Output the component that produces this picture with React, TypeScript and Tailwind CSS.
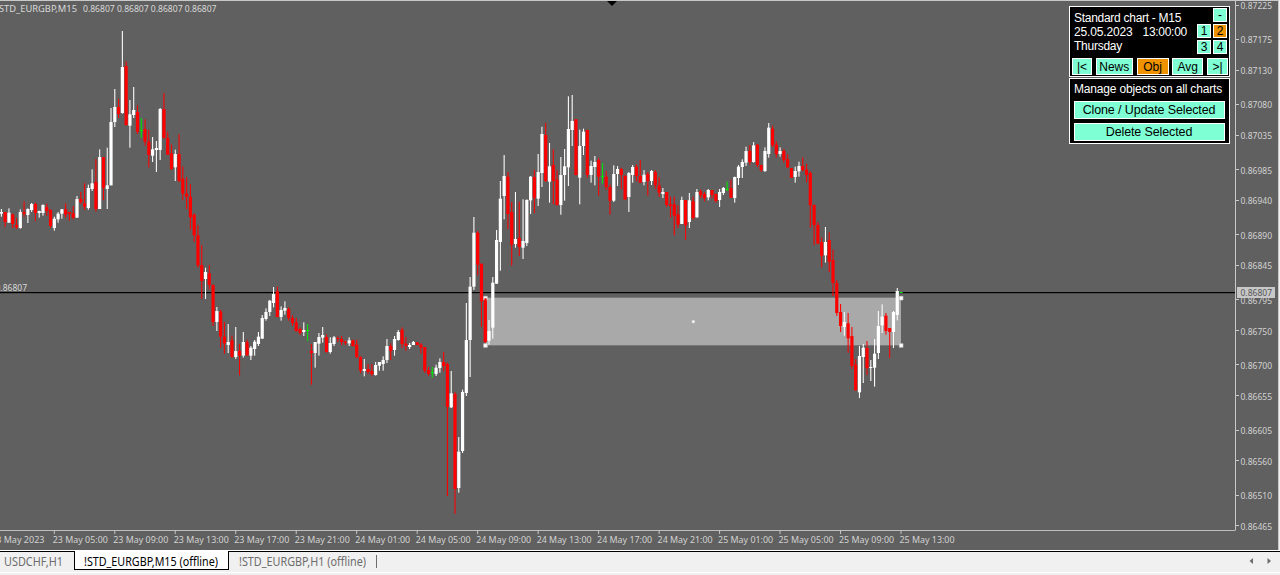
type CandleKind = "up" | "down" | "flat";

interface Candle {
  kind: CandleKind;
  high: number;
  top: number;
  bottom: number;
  low: number;
}

// Chart units are thirds of a pixel
const STEP = 11.34;
const FIRST_X = 4.2;

// Each session: vertical base, then "kind high top bottom low" per M15 bar
const sessions: { base: number; bars: string }[] = [
  {
    base: 0,
    bars: `W 627 636 641 650,R 636 636 666 681,W 625 638 668 668,R 641 643 672 684,R 655 675 682 687,W 628 636 684 686,
R 604 636 641 650,W 625 627 645 669,W 609 612 630 636,R 608 612 639 663,W 632 633 639 653,W 613 615 639 647,
R 611 621 633 647,R 628 630 678 684,W 650 656 684 692,W 636 641 658 668,W 627 628 641 656,R 610 628 644 653,
R 636 636 641 662,R 618 640 653 658,W 588 597 653 653,R 576 597 607 611,R 550 610 620 630,W 554 564 624 629,
W 508 550 567 573,R 477 546 627 635,W 448 471 627 627,R 471 471 563 601,W 443 556 567 627,W 324 366 556 556,
W 267 321 366 381,R 297 321 342 354,W 93 201 339 341,R 184 198 375 377,W 300 343 377 443,W 261 330 345 354,
R 316 336 395 402,G 354 390 393 413,R 358 387 425 437,R 390 425 465 502,W 411 448 467 486,W 423 444 450 516,
W 324 327 450 480,R 279 327 414 416,R 395 414 464 465,R 434 460 507 510,W 449 462 502 543,R 403 462 542 547,
R 499 536 581 601,R 531 581 590 627,R 553 590 652 689,R 640 644 706 726,R 675 706 796 803`,
  },
  {
    base: 720,
    bars: `R 15 75 123 177,W 83 96 117 177,R 75 100 135 148,R 133 135 246 258,W 201 213 246 273,R 210 215 290 323,
R 246 290 310 341,W 252 306 315 339,R 287 301 351 353,W 261 333 351 357,R 312 333 347 406,W 276 306 347 353,
R 299 307 346 347,W 318 323 347 360,W 300 305 327 347,W 276 290 312 318,W 225 234 296 296,W 205 216 237 242,
W 180 182 216 228,W 141 162 189 202,R 140 154 231 232,W 199 210 231 242,W 184 204 212 224,R 202 207 234 242,
R 225 234 249 258,R 234 247 273 275,R 262 267 279 285,W 247 270 276 288,G 252 270 273 303,R 312 333 339 434,
W 306 306 339 383,W 279 291 311 347,W 261 285 293 308,R 283 291 336 338,W 292 309 336 341,W 288 292 312 318,
R 289 294 297 306,R 288 297 306 315,R 302 305 309 315,W 292 301 310 318,R 299 301 318 320,R 299 314 351 355,
R 349 351 392 400,W 357 387 393 409,R 372 387 396 402,R 372 393 402 409,W 366 375 405 407,W 366 366 377 392,
W 349 360 372 392,W 297 318 360 369,R 310 318 333 360,W 288 297 330 347,W 270 276 300 302,R 262 269 312 324,
R 291 311 318 333,W 309 315 321 327,W 303 306 315 315,R 306 307 315 316,R 309 314 323 341,R 321 321 392 398,
R 381 390 402 408,G 381 396 399 413,W 374 383 402 408,W 355 366 384 398`,
  },
  {
    base: 540,
    bars: `R 516 546 558 574,R 548 552 681 948,W 573 640 682 684,R 636 642 927 1002,W 771 815 924 938,W 629 636 813 819,
W 369 480 639 648,W 291 320 480 591,W 111 158 320 330,R 153 158 254 286,R 251 251 364 441,R 354 362 486 489,
W 420 453 482 494,W 291 308 443 476,W 150 180 311 311,W 3 56 186 272`,
  },
  {
    base: 240,
    bars: `W 225 288 348 418,R 276 290 402 447,R 366 396 494 557,W 336 477 492 503,R 365 474 501 528,W 358 483 503 537,
W 358 360 489 498,W 288 290 361 402,R 270 291 353 399,W 222 276 356 378,W 140 162 279 321,R 129 165 303 306,
W 189 259 305 368,R 208 255 303 373,R 270 299 375 377,W 231 285 375 404,W 207 259 285 362,W 49 147 262 318,
W 45 123 150 198,R 117 118 285 286,W 149 198 293 373,W 146 155 198 225,R 149 150 285 293,W 242 258 285 308,
W 228 246 261 316,R 234 240 290 347,G 249 288 291 311,R 273 290 321 330,R 313 321 362 404,W 256 282 362 366,
W 258 267 282 318,R 263 267 285 327,R 285 288 358 360,W 276 279 351 396,W 255 261 285 308,R 253 260 288 304,
R 240 288 308 309,W 270 284 306 316,R 276 282 303 347,W 270 273 303 315,R 270 276 316 327,R 291 316 338 351,
W 324 336 342 354,R 336 336 375 381,R 350 373 378 413,R 350 373 407 466,R 376 403 434 444,W 350 360 432 432,
R 360 360 436 479,W 339 361 426 444,R 350 364 414 420,W 327 336 412 413,R 328 334 345 354,R 336 342 355 364,
W 327 330 352 361`,
  },
  {
    base: 330,
    bars: `R 240 240 255 265,R 251 252 273 278,W 237 246 270 291,W 231 234 249 255,G 215 237 240 243,R 209 234 263 264,
W 200 201 264 278,W 165 170 204 225,W 148 156 171 204,W 110 123 158 168,R 105 123 156 164,W 96 106 156 158,
R 102 104 165 171,R 164 165 180 185,W 112 123 183 186,W 39 53 132 143,R 47 56 106 111,R 93 104 132 143,
W 112 123 132 140,R 117 123 150 158,R 133 148 172 174,R 174 175 203 204,W 170 183 201 218,W 155 168 184 200,
R 142 168 180 184,R 161 179 195 217,R 184 189 286 353,R 283 285 345 405,R 336 345 401 402,R 382 396 437 472,
W 351 396 436 458`,
  },
  {
    base: 600,
    bars: `R 97 120 185 216,R 149 180 249 288,R 240 249 339 348,R 312 336 378 396,W 336 366 381 407,R 339 370 415 458,
R 381 408 498 507,R 477 494 571 572,W 438 468 577 594,W 432 443 471 549,R 423 444 504 525,W 480 501 504 543,
W 417 461 503 560,W 333 378 459 477,W 313 350 376 399,R 339 347 393 404,R 384 384 396 474,W 333 336 396 444,
W 264 273 345 361,G 276 276 279 279`,
  },
];

const kinds: Record<string, CandleKind> = { W: "up", R: "down", G: "flat" };
const fills: Record<CandleKind, string> = {
  up: "fill-white",
  down: "fill-[#ff0000]",
  flat: "fill-[#00e600]",
};

const candles: Candle[] = sessions.flatMap(({ base, bars }) =>
  bars.split(",").map((bar) => {
    const [k, ...values] = bar.trim().split(" ");
    const [high, top, bottom, low] = values.map((v) => Number(v) + base);
    return { kind: kinds[k], high, top, bottom, low };
  }),
);

const prices = [
  "0.87225", "0.87175", "0.87130", "0.87080", "0.87035", "0.86985",
  "0.86940", "0.86890", "0.86845", "0.86795", "0.86750", "0.86700",
  "0.86655", "0.86605", "0.86560", "0.86510", "0.86465",
];

const times = [
  "23 May 2023", "23 May 05:00", "23 May 09:00", "23 May 13:00",
  "23 May 17:00", "23 May 21:00", "24 May 01:00", "24 May 05:00",
  "24 May 09:00", "24 May 13:00", "24 May 17:00", "24 May 21:00",
  "25 May 01:00", "25 May 05:00", "25 May 09:00", "25 May 13:00",
];

const priceY = (price: string) => 5.5 + (0.87225 - Number(price)) * 68550;

function CandleChart() {
  return (
    <svg className="block h-[530px] w-[1235px]" viewBox="0 0 3705 1590">
      <path d="M0 877.5H3705" className="stroke-black" strokeWidth="3" />
      <path d="M0 880.5H3705" className="stroke-[#4c4c4c]" strokeWidth="3" />
      <rect x="1457" y="893" width="1246" height="143" className="fill-[#a9a9a9]" />
      {candles.map((c, i) => {
        const x = FIRST_X + i * STEP;
        return (
          <g key={i} className={fills[c.kind]}>
            <rect x={x - 1.6} y={c.high} width={3.2} height={c.low - c.high} />
            <rect
              x={x - 4.8}
              y={c.top}
              width={9.6}
              height={Math.max(c.bottom - c.top, 3)}
            />
          </g>
        );
      })}
      {/* Selection anchors of the zone */}
      <g className="fill-white stroke-[#c8c8c8]" strokeWidth="2">
        <path d="M1451 889h11v11h-11zM1451 1031h11v11h-11zM2698 889h11v11h-11zM2698 1031h11v11h-11z" />
        <path d="M2076 961h8v8h-8z" />
      </g>
      <rect x="1453" y="895" width="7" height="130" className="fill-[#ff0000]" />
      <path d="M1821 3h30l-15 15z" className="fill-black" />
    </svg>
  );
}

function PriceAxis() {
  return (
    <div className="relative h-[530px] w-[43px] border-l border-[#c8c8c8]">
      {prices.map((price) => (
        <div
          key={price}
          className="absolute left-0 flex h-3 items-center"
          style={{ top: priceY(price) - 6.5 }}
        >
          <span className="h-px w-[3px] bg-[#c8c8c8]" />
          <svg className="h-3 w-[36px]">
            <text
              x="1.5"
              y="10"
              textLength="31.5"
              lengthAdjust="spacingAndGlyphs"
              className="fill-[#d2d2d2] font-['Noto_Sans',sans-serif] text-[9.8px]"
            >
              {price}
            </text>
          </svg>
        </div>
      ))}
      <div className="absolute top-[287px] left-px h-[11px] w-[38px] bg-[#c8c8c8]">
        <svg className="block h-[11px] w-[38px]">
          <text
            x="3.5"
            y="9"
            textLength="31.5"
            lengthAdjust="spacingAndGlyphs"
            className="fill-[#555] font-['Noto_Sans',sans-serif] text-[9.8px]"
          >
            0.86807
          </text>
        </svg>
      </div>
    </div>
  );
}

function TimeAxis() {
  return (
    <svg className="block h-[19px] w-[1278px]">
      <path d="M0 .5H1235.5" className="stroke-[#bdbdbd]" />
      {times.map((time, i) => {
        const x = 54.3 + (i - 1) * 60.48;
        return (
          <g key={time}>
            <path d={`M${x} 0v4`} className="stroke-[#c8c8c8]" />
            <text
              x={i === 0 ? -9 : x - 1.5}
              y="13"
              textLength={i === 0 ? 53.5 : 55}
              lengthAdjust="spacingAndGlyphs"
              className="fill-[#d2d2d2] font-['Noto_Sans',sans-serif] text-[9.6px]"
            >
              {time}
            </text>
          </g>
        );
      })}
    </svg>
  );
}

interface PanelButtonProps {
  label: string;
  className: string;
  active?: boolean;
}

function PanelButton({ label, className, active }: PanelButtonProps) {
  return (
    <button
      className={`flex items-center justify-center border border-white text-black ${
        active ? "bg-[#ee9200]" : "bg-[#7fffd4]"
      } ${className}`}
    >
      {label}
    </button>
  );
}

function ControlPanel() {
  return (
    <div className="absolute top-[6px] left-[1069px] w-[161px] font-['Liberation_Sans',Arial,sans-serif] text-[12px] leading-[14px] whitespace-nowrap text-white">
      <div className="h-[71px] border border-white bg-black pt-[4px] pl-[3px]">
        <div className="flex h-[45px] justify-between pr-[2px]">
          <div className="pl-px text-[12px]">
            <p className="tracking-[-0.28px]">Standard chart - M15</p>
            <p>
              <span className="mr-[10px] tracking-[-0.15px]">25.05.2023</span>
              <span className="tracking-[-0.3px]">13:00:00</span>
            </p>
            <p className="tracking-[-0.25px]">Thursday</p>
          </div>
          <div className="-mt-[4px] flex flex-col items-end gap-[2px] pt-px">
            <PanelButton label="-" className="h-[14px] w-[14px]" />
            <div className="grid grid-cols-2 gap-[2px]">
              <PanelButton label="1" className="h-[14px] w-[14px]" />
              <PanelButton label="2" className="h-[14px] w-[14px]" active />
              <PanelButton label="3" className="h-[14px] w-[14px]" />
              <PanelButton label="4" className="h-[14px] w-[14px]" />
            </div>
          </div>
        </div>
        <div className="-ml-px flex justify-between pt-[2px] pr-px">
          <PanelButton label="|<" className="h-[17px] w-[20px]" />
          <PanelButton label="News" className="h-[17px] w-[37px]" />
          <PanelButton label="Obj" className="h-[17px] w-[32px]" active />
          <PanelButton label="Avg" className="h-[17px] w-[31px]" />
          <PanelButton label=">|" className="h-[17px] w-[21px]" />
        </div>
      </div>
      <div className="mt-px h-[66px] border border-white bg-black px-[4px] pt-[3px]">
        <p className="tracking-[-0.17px]">Manage objects on all charts</p>
        <PanelButton
          label="Clone / Update Selected"
          className="mt-[5px] h-[18px] w-full pr-px text-[12.5px] tracking-[-0.12px]"
        />
        <PanelButton
          label="Delete Selected"
          className="mt-[4px] h-[18px] w-full pr-px text-[12.5px] tracking-[-0.12px]"
        />
      </div>
    </div>
  );
}

function TabLabel({ text, width, className }: { text: string; width: number; className: string }) {
  return (
    <svg className="block h-[18px]" style={{ width }}>
      <text
        x="0"
        y="12.5"
        textLength={width}
        lengthAdjust="spacingAndGlyphs"
        className={`font-['Noto_Sans',sans-serif] text-[12px] ${className}`}
      >
        {text}
      </text>
    </svg>
  );
}

function ChartTabs() {
  return (
    <div className="flex h-[20px] items-start bg-[#f0f0f0]">
      <div className="h-[20px] w-[74px] pt-px pl-[4px]">
        <TabLabel text="USDCHF,H1" width={59} className="fill-[#6d6d6d]" />
      </div>
      <div className="-mt-px h-[19px] w-[155px] border-x border-b border-black bg-white pt-[2px] pl-[9px]">
        <TabLabel text="!STD_EURGBP,M15 (offline)" width={134} className="fill-black" />
      </div>
      <div className="h-[20px] w-[147px] pt-px pl-[10px]">
        <TabLabel text="!STD_EURGBP,H1 (offline)" width={127} className="fill-[#6d6d6d]" />
      </div>
      <div className="mt-[3px] h-[13px] w-px bg-[#6d6d6d]" />
      <svg className="mt-[5px] mr-[8px] ml-auto h-[8px] w-[24px] fill-[#6d6d6d]">
        <path d="M5 1v6L1.5 4zM19.500 1v6L23 4z" />
      </svg>
    </div>
  );
}

export default function App() {
  return (
    <div className="h-[575px] w-[1280px] overflow-hidden bg-[#f0f0f0]">
      <div className="relative h-[550px] w-[1279px] border-r border-[#c8c8c8] bg-[#606060]">
        <div className="flex">
          <CandleChart />
          <PriceAxis />
        </div>
        <TimeAxis />
        <div className="absolute top-0 left-0 h-px w-full bg-[#c8c8c8]" />
        <svg className="absolute top-[2px] left-0 h-[14px] w-[220px] fill-[#d8d8d8] font-['Noto_Sans',sans-serif] text-[9.8px]">
          <text x="-1" y="9.5" textLength="78" lengthAdjust="spacingAndGlyphs">STD_EURGBP,M15</text>
          <text x="83" y="9.5" textLength="133.5" lengthAdjust="spacingAndGlyphs">
            0.86807 0.86807 0.86807 0.86807
          </text>
        </svg>
        <svg className="absolute top-[281px] left-0 h-[12px] w-[40px] fill-[#d8d8d8] font-['Noto_Sans',sans-serif] text-[9.8px]">
          <text x="-4.5" y="9.5" textLength="31.5" lengthAdjust="spacingAndGlyphs">0.86807</text>
        </svg>
        <ControlPanel />
      </div>
      <div className="h-[2px] border-b border-black bg-white" />
      <ChartTabs />
      <div className="h-px bg-white" />
    </div>
  );
}
